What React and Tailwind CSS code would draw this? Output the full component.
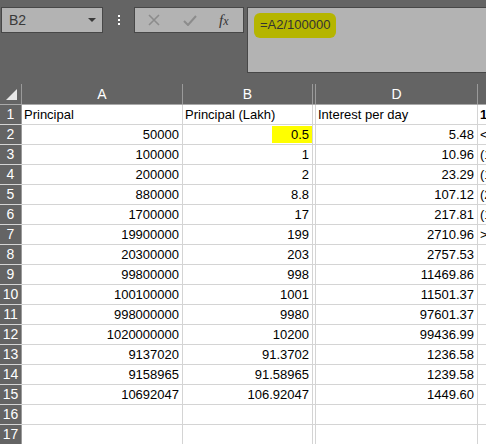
import React from "react";

const rows = [
  ["Principal", "Principal (Lakh)", "Interest per day", "1"],
  ["50000", "0.5", "5.48", "<"],
  ["100000", "1", "10.96", "(1"],
  ["200000", "2", "23.29", "(1"],
  ["880000", "8.8", "107.12", "(2"],
  ["1700000", "17", "217.81", "(1"],
  ["19900000", "199", "2710.96", ">"],
  ["20300000", "203", "2757.53", ""],
  ["99800000", "998", "11469.86", ""],
  ["100100000", "1001", "11501.37", ""],
  ["998000000", "9980", "97601.37", ""],
  ["1020000000", "10200", "99436.99", ""],
  ["9137020", "91.3702", "1236.58", ""],
  ["9158965", "91.58965", "1239.58", ""],
  ["10692047", "106.92047", "1449.60", ""],
  ["", "", "", ""],
  ["", "", "", ""],
];

function Cell({ width, children, right, yellow }) {
  return (
    <div
      className={`${width} shrink-0 h-full border-r border-[#d4d4d4] flex items-end pb-[1px] overflow-hidden whitespace-nowrap`}
    >
      {children !== undefined && children !== "" && (
        <span
          className={`${yellow ? "bg-[#ffff00] w-[40px]" : ""} ${right ? "ml-auto text-right pr-[3px]" : "pl-[2px]"} leading-[17px]`}
        >
          {children}
        </span>
      )}
    </div>
  );
}

export default function App() {
  return (
    <div
      className="w-[486px] h-[444px] overflow-hidden bg-[#646464] text-[13px] text-black"
      style={{ fontFamily: '"Liberation Sans", Arial, sans-serif' }}
    >
      {/* formula bar area */}
      <div className="h-[84px] flex items-start pt-[7px] pl-px">
        <div className="w-[102px] h-[26px] border border-[#474747] bg-[#b3b3b3] flex items-center pl-[7px] pr-[6px]">
          <span className="text-[14px] text-[#3a3a3a]">B2</span>
          <svg className="ml-auto" width="8" height="5" viewBox="0 0 8 5">
            <path d="M0 0h8L4 4z" fill="#3a3a3a" />
          </svg>
        </div>
        <div className="w-[31px] h-[26px] flex flex-col items-center justify-center gap-[2px]">
          <div className="w-[2px] h-[2px] bg-white" />
          <div className="w-[2px] h-[2px] bg-white" />
          <div className="w-[2px] h-[2px] bg-white" />
        </div>
        <div className="w-[110px] h-[26px] border border-[#474747] bg-[#b3b3b3] flex items-center">
          <svg className="ml-[13px]" width="12" height="12" viewBox="0 0 12 12">
            <path d="M1 1L11 11M11 1L1 11" stroke="#8c8c8c" strokeWidth="1.6" />
          </svg>
          <svg className="ml-[23px]" width="14" height="11" viewBox="0 0 14 11">
            <path d="M1 6l4 4L13 1" stroke="#8c8c8c" strokeWidth="2" fill="none" />
          </svg>
          <span
            className="ml-[22px] text-[15px] italic text-[#333] leading-none"
            style={{ fontFamily: '"Liberation Serif", serif' }}
          >
            f<span className="text-[12px]">x</span>
          </span>
        </div>
        <div className="ml-[3px] flex-1 h-[66px] border border-[#474747] border-r-0 bg-[#b3b3b3] pl-[6px] pt-[5px]">
          <span className="inline-block bg-[#b5b500] rounded-[6px] px-[6px] pt-[2px] pb-[3px] text-[13px] text-[#333]">
            =A2/100000
          </span>
        </div>
      </div>

      {/* column headers */}
      <div className="h-[21px] flex border-b border-[#a9a9a9] text-white text-[14px]">
        <div className="w-[22px] shrink-0 border-r border-[#9a9a9a] relative">
          <svg className="absolute left-[6px] top-[5px]" width="11" height="11" viewBox="0 0 11 11">
            <path d="M11 0V11H0z" fill="#e8e8e8" />
          </svg>
        </div>
        <div className="w-[161px] shrink-0 border-r border-[#9a9a9a] flex items-center justify-center">A</div>
        <div className="w-[130px] shrink-0 border-r border-[#9a9a9a] flex items-center justify-center">B</div>
        <div className="w-[3px] shrink-0 border-r border-[#9a9a9a]" />
        <div className="w-[162px] shrink-0 border-r border-[#9a9a9a] flex items-center justify-center">D</div>
        <div className="flex-1" />
      </div>

      {/* rows */}
      {rows.map((r, i) => (
        <div key={i} className="h-[20px] flex border-b border-[#d4d4d4] bg-white">
          <div className="w-[22px] shrink-0 h-full bg-[#646464] border-r border-[#9a9a9a] text-white text-[14px] flex items-center justify-center">
            {i + 1}
          </div>
          <Cell width="w-[161px]" right={i > 0}>{r[0]}</Cell>
          <Cell width="w-[130px]" right={i > 0} yellow={i === 1}>{r[1]}</Cell>
          <div className="w-[3px] shrink-0 h-full border-r border-[#d4d4d4]" />
          <Cell width="w-[162px]" right={i > 0}>{r[2]}</Cell>
          <div className="flex-1 h-full flex items-end pb-[1px] pl-[2px] whitespace-nowrap overflow-hidden">
            <span className={`leading-[17px] ${i === 0 ? "font-bold" : ""}`}>{r[3]}</span>
          </div>
        </div>
      ))}
    </div>
  );
}
